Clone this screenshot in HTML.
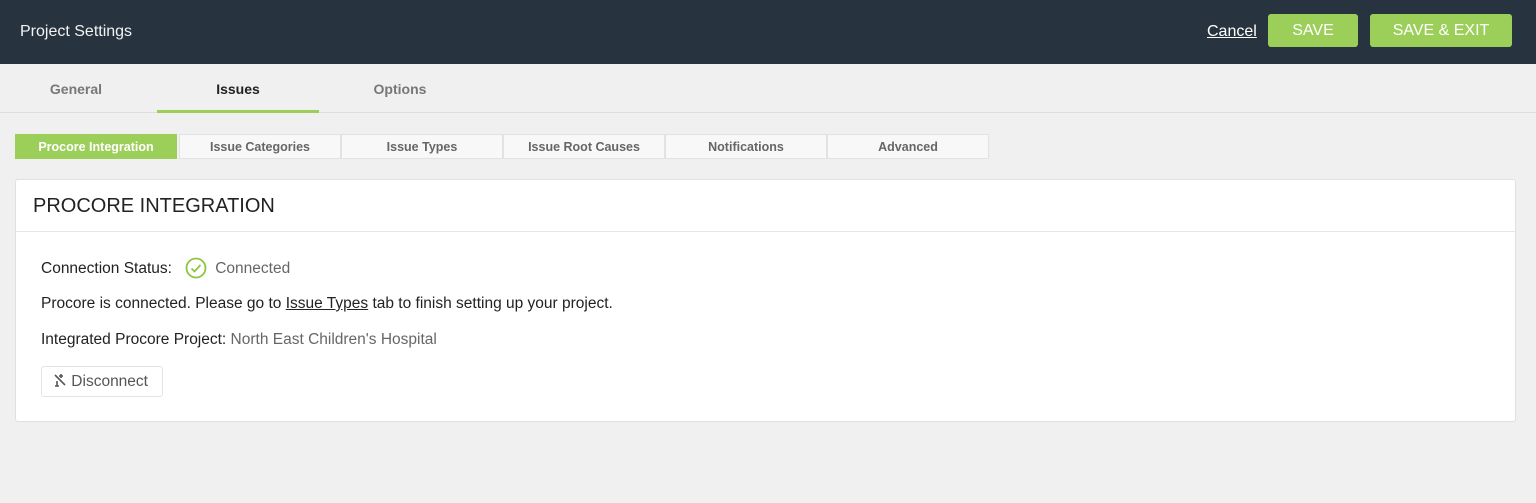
<!DOCTYPE html>
<html><head><style>
*{box-sizing:border-box;margin:0;padding:0}
body{width:1536px;height:503px;background:#f0f0f0;font-family:"Liberation Sans",sans-serif;position:relative;overflow:hidden}
.top{position:absolute;left:0;top:0;width:1536px;height:64px;background:#27333e}
.title{position:absolute;left:20px;top:23px;color:#f2f2f2;font-size:16px}
.cancel{position:absolute;left:1207px;top:23px;color:#fff;font-size:16px;text-decoration:underline}
.btn{position:absolute;top:14px;height:33px;background:#9ccf5a;border-radius:3px;color:#fff;font-size:16px;text-align:center;line-height:34px}
.tabs{position:absolute;top:64px;left:0;width:1536px;height:49px;border-bottom:1px solid #ddd}
.tab{position:absolute;top:17px;font-size:14px;font-weight:bold;color:#777;width:162px;text-align:center}
.sub{position:absolute;top:134px;height:25px;width:162px;background:#f8f8f8;border:1px solid #e2e2e2;font-size:12.5px;font-weight:bold;color:#666;text-align:center;line-height:24px}
.card{position:absolute;left:15px;top:179px;width:1501px;height:243px;background:#fff;border:1px solid #e0e0e0;border-radius:3px}
.hdr{height:52px;border-bottom:1px solid #e6e6e6;font-size:20px;color:#222;padding:15px 0 0 17px}
.row{position:absolute;left:25px;font-size:15.5px;color:#222}
.g{color:#666}
</style></head><body>
<div class="top">
<div class="title">Project Settings</div>
<div class="cancel">Cancel</div>
<div class="btn" style="left:1268px;width:90px">SAVE</div>
<div class="btn" style="left:1370px;width:142px">SAVE &amp; EXIT</div>
</div>
<div class="tabs">
<div class="tab" style="left:-5px">General</div>
<div class="tab" style="left:157px;color:#222">Issues</div>
<div style="position:absolute;left:157px;top:46px;width:162px;height:3px;background:#9ccf5a"></div>
<div class="tab" style="left:319px">Options</div>
</div>
<div class="sub" style="left:15px;background:#9ccf5a;color:#fff;border-color:#9ccf5a">Procore Integration</div>
<div class="sub" style="left:179px">Issue Categories</div>
<div class="sub" style="left:341px">Issue Types</div>
<div class="sub" style="left:503px">Issue Root Causes</div>
<div class="sub" style="left:665px">Notifications</div>
<div class="sub" style="left:827px">Advanced</div>
<div class="card">
<div class="hdr">PROCORE INTEGRATION</div>
<div class="row" style="top:77px">Connection Status:&nbsp;
<svg width="22" height="22" viewBox="0 0 22 22" style="vertical-align:-6px;margin-left:4px"><circle cx="11" cy="11" r="9.5" fill="none" stroke="#8cc63f" stroke-width="1.8"/><path d="M6.5 11.5l3 3 6-6.5" fill="none" stroke="#8cc63f" stroke-width="1.8"/></svg>
<span class="g">&nbsp;Connected</span></div>
<div class="row" style="top:115px">Procore is connected. Please go to <u>Issue Types</u> tab to finish setting up your project.</div>
<div class="row" style="top:151px">Integrated Procore Project: <span class="g">North East Children's Hospital</span></div>
<div style="position:absolute;left:25px;top:186px;width:122px;height:31px;border:1px solid #e0e4ea;border-radius:3px;font-size:15.5px;color:#555;padding:6px 0 0 11px">
<svg width="14" height="14" viewBox="0 0 14 14" style="vertical-align:-1px"><path d="M2 2l10 10M8 1v4M10 3h-4M4 8v5M2 13h4" stroke="#555" stroke-width="1.6" fill="none"/></svg> Disconnect</div>
</div>
</body></html>
